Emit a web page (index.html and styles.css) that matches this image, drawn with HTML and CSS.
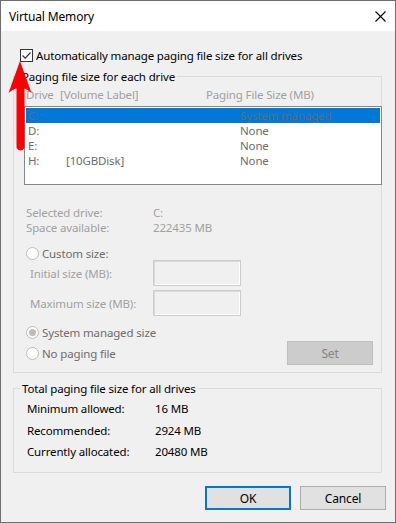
FILE: index.html
```
<!DOCTYPE html>
<html>
<head>
<meta charset="utf-8">
<link rel="stylesheet" href="styles.css">
</head>
<body>
<div class="window">
  <div class="titlebar">
    <span class="title">Virtual Memory</span>
    <svg class="close" width="11" height="11" viewBox="0 0 11 11"><path d="M0.5 0.5 L10.5 10.5 M10.5 0.5 L0.5 10.5" stroke="#000" stroke-width="1.1" fill="none"/></svg>
  </div>
  <div class="body">
    <div class="check-row">
      <span class="checkbox"><svg width="11" height="11" viewBox="0 0 11 11"><path d="M1.5 5.5 L4.2 8.2 L9.5 2.5" stroke="#333" stroke-width="1.2" fill="none"/></svg></span>
      <span>Automatically manage paging file size for all drives</span>
    </div>

    <fieldset class="group group-drives">
      <legend>Paging file size for each drive</legend>
      <div class="list-head">
        <span class="col-drive">Drive</span><span class="col-label">[Volume Label]</span><span class="col-size">Paging File Size (MB)</span>
      </div>
      <div class="listbox">
        <div class="row selected"><span class="c-drive">C:</span><span class="c-label"></span><span class="c-size">System managed</span></div>
        <div class="row"><span class="c-drive">D:</span><span class="c-label"></span><span class="c-size">None</span></div>
        <div class="row"><span class="c-drive">E:</span><span class="c-label"></span><span class="c-size">None</span></div>
        <div class="row"><span class="c-drive">H:</span><span class="c-label">[10GBDisk]</span><span class="c-size">None</span></div>
      </div>
      <div class="info">
        <div class="info-row"><span class="info-key">Selected drive:</span><span>C:</span></div>
        <div class="info-row"><span class="info-key">Space available:</span><span>222435 MB</span></div>
      </div>
      <div class="radio-row custom"><span class="radio"></span><span>Custom size:</span></div>
      <div class="size-row first"><span class="size-key">Initial size (MB):</span><span class="field"></span></div>
      <div class="size-row"><span class="size-key">Maximum size (MB):</span><span class="field"></span></div>
      <div class="radio-row sysman"><span class="radio checked"></span><span>System managed size</span></div>
      <div class="nopage-row">
        <div class="radio-row inline"><span class="radio"></span><span>No paging file</span></div>
        <span class="btn set">Set</span>
      </div>
    </fieldset>

    <fieldset class="group group-total">
      <legend>Total paging file size for all drives</legend>
      <div class="totals">
        <div class="total-row"><span class="total-key">Minimum allowed:</span><span>16 MB</span></div>
        <div class="total-row"><span class="total-key">Recommended:</span><span>2924 MB</span></div>
        <div class="total-row"><span class="total-key">Currently allocated:</span><span>20480 MB</span></div>
      </div>
    </fieldset>

    <div class="buttons">
      <span class="btn ok">OK</span>
      <span class="btn cancel">Cancel</span>
    </div>
  </div>
  <svg class="arrow" width="40" height="160" viewBox="0 0 40 160">
    <path d="M20 61 L31.5 93 Q27 89 24.5 88.5 L24.5 148 Q20.5 153 16.5 148 L16.5 88.5 Q13 89 8.5 93 Z" fill="#ff0000"/>
  </svg>
</div>
</body>
</html>
```

FILE: styles.css
```
* { box-sizing: border-box; }
html, body { margin: 0; padding: 0; }
body {
  font-family: "Noto Sans", "Open Sans", sans-serif;
  font-size: 11.5px;
  letter-spacing: -0.15px;
  line-height: 15px;
  color: #000;
  background: #fff;
}
.window {
  position: relative;
  width: 396px;
  height: 523px;
  border: 1px solid #6e6e6e;
  background: #f0f0f0;
  overflow: hidden;
}
.titlebar {
  height: 30px;
  background: #fff;
  display: flex;
  align-items: center;
  justify-content: space-between;
  padding: 0 9px 0 8px;
}
.title { font-size: 12px; }
.close { display: block; }

.body {
  padding: 0 13px 0 12px;
}
.check-row {
  margin-top: 17px;
  display: flex;
  align-items: center;
  height: 15px;
  padding-left: 7px;
}
.checkbox {
  width: 13px;
  height: 13px;
  border: 1px solid #333;
  background: #fff;
  margin-right: 3px;
  display: flex;
  align-items: center;
  justify-content: center;
}
.checkbox svg { display: block; }

.group {
  margin: 0;
  border: 1px solid #dcdcdc;
  padding: 0;
  min-width: 0;
}
.group legend {
  padding: 0 2px;
  margin-left: 6px;
  line-height: 15px;
}
.group-drives {
  margin-top: 6px;
  padding-bottom: 7px;
}
.list-head {
  margin-top: 3px;
  display: flex;
  color: #a0a0a0;
  padding-left: 12px;
  height: 15px;
}
.col-drive { width: 34px; }
.col-label { width: 146px; }
.listbox {
  margin: 4px -1px 0 10px;
  height: 79px;
  border: 1px solid #828790;
  background: #fff;
  padding: 1px;
}
.row {
  display: flex;
  height: 15px;
  color: #6d6d6d;
  padding-left: 2px;
}
.row.selected { background: #0078d7; color: #5e6e80; }
.c-drive { width: 38px; }
.c-label { width: 174px; }

.info { margin-top: 20px; padding-left: 12px; color: #a0a0a0; }
.info-row { display: flex; height: 15px; }
.info-key { width: 127px; }

.radio-row {
  display: flex;
  align-items: center;
  height: 14px;
  padding-left: 12px;
  color: #6d6d6d;
}
.radio-row.custom { margin-top: 11px; }
.radio-row.sysman { margin-top: 9px; }
.radio-row.inline { height: auto; }
.radio {
  width: 13px;
  height: 13px;
  border-radius: 50%;
  border: 1px solid #bcbcbc;
  background: #fff;
  margin-right: 3px;
  display: flex;
  align-items: center;
  justify-content: center;
}
.radio.checked::after {
  content: "";
  width: 7px;
  height: 7px;
  border-radius: 50%;
  background: #bcbcbc;
}
.size-row {
  display: flex;
  align-items: center;
  height: 26px;
  padding-left: 16px;
  color: #a0a0a0;
  margin-top: 4px;
}
.size-row.first { margin-top: 0; }
.size-key { width: 123px; }
.field {
  width: 88px;
  height: 26px;
  border: 1px solid #cccccc;
  box-shadow: inset 1px 1px 0 #d9d9d9, inset -1px -1px 0 #fff;
  background: #f0f0f0;
}
.nopage-row {
  margin-top: 2px;
  display: flex;
  align-items: center;
  justify-content: space-between;
  height: 24px;
  padding-right: 8px;
}
.btn {
  display: flex;
  align-items: center;
  justify-content: center;
  width: 86px;
  height: 24px;
  background: #e1e1e1;
  border: 1px solid #adadad;
  font-size: 12px;
}
.btn.set {
  background: #cccccc;
  border-color: #bfbfbf;
  color: #838383;
}
.group-total {
  margin-top: 8px;
}
.totals {
  padding: 2px 0 9.5px 13px;
}
.total-row { display: flex; line-height: 21.5px; height: 21.5px; }
.total-key { width: 128px; }

.buttons {
  margin-top: 13px;
  margin-right: -4px;
  display: flex;
  justify-content: flex-end;
  gap: 9px;
}
.btn.ok { border: 2px solid #0078d7; }

.arrow {
  position: absolute;
  left: -1px;
  top: -1px;
}
```
